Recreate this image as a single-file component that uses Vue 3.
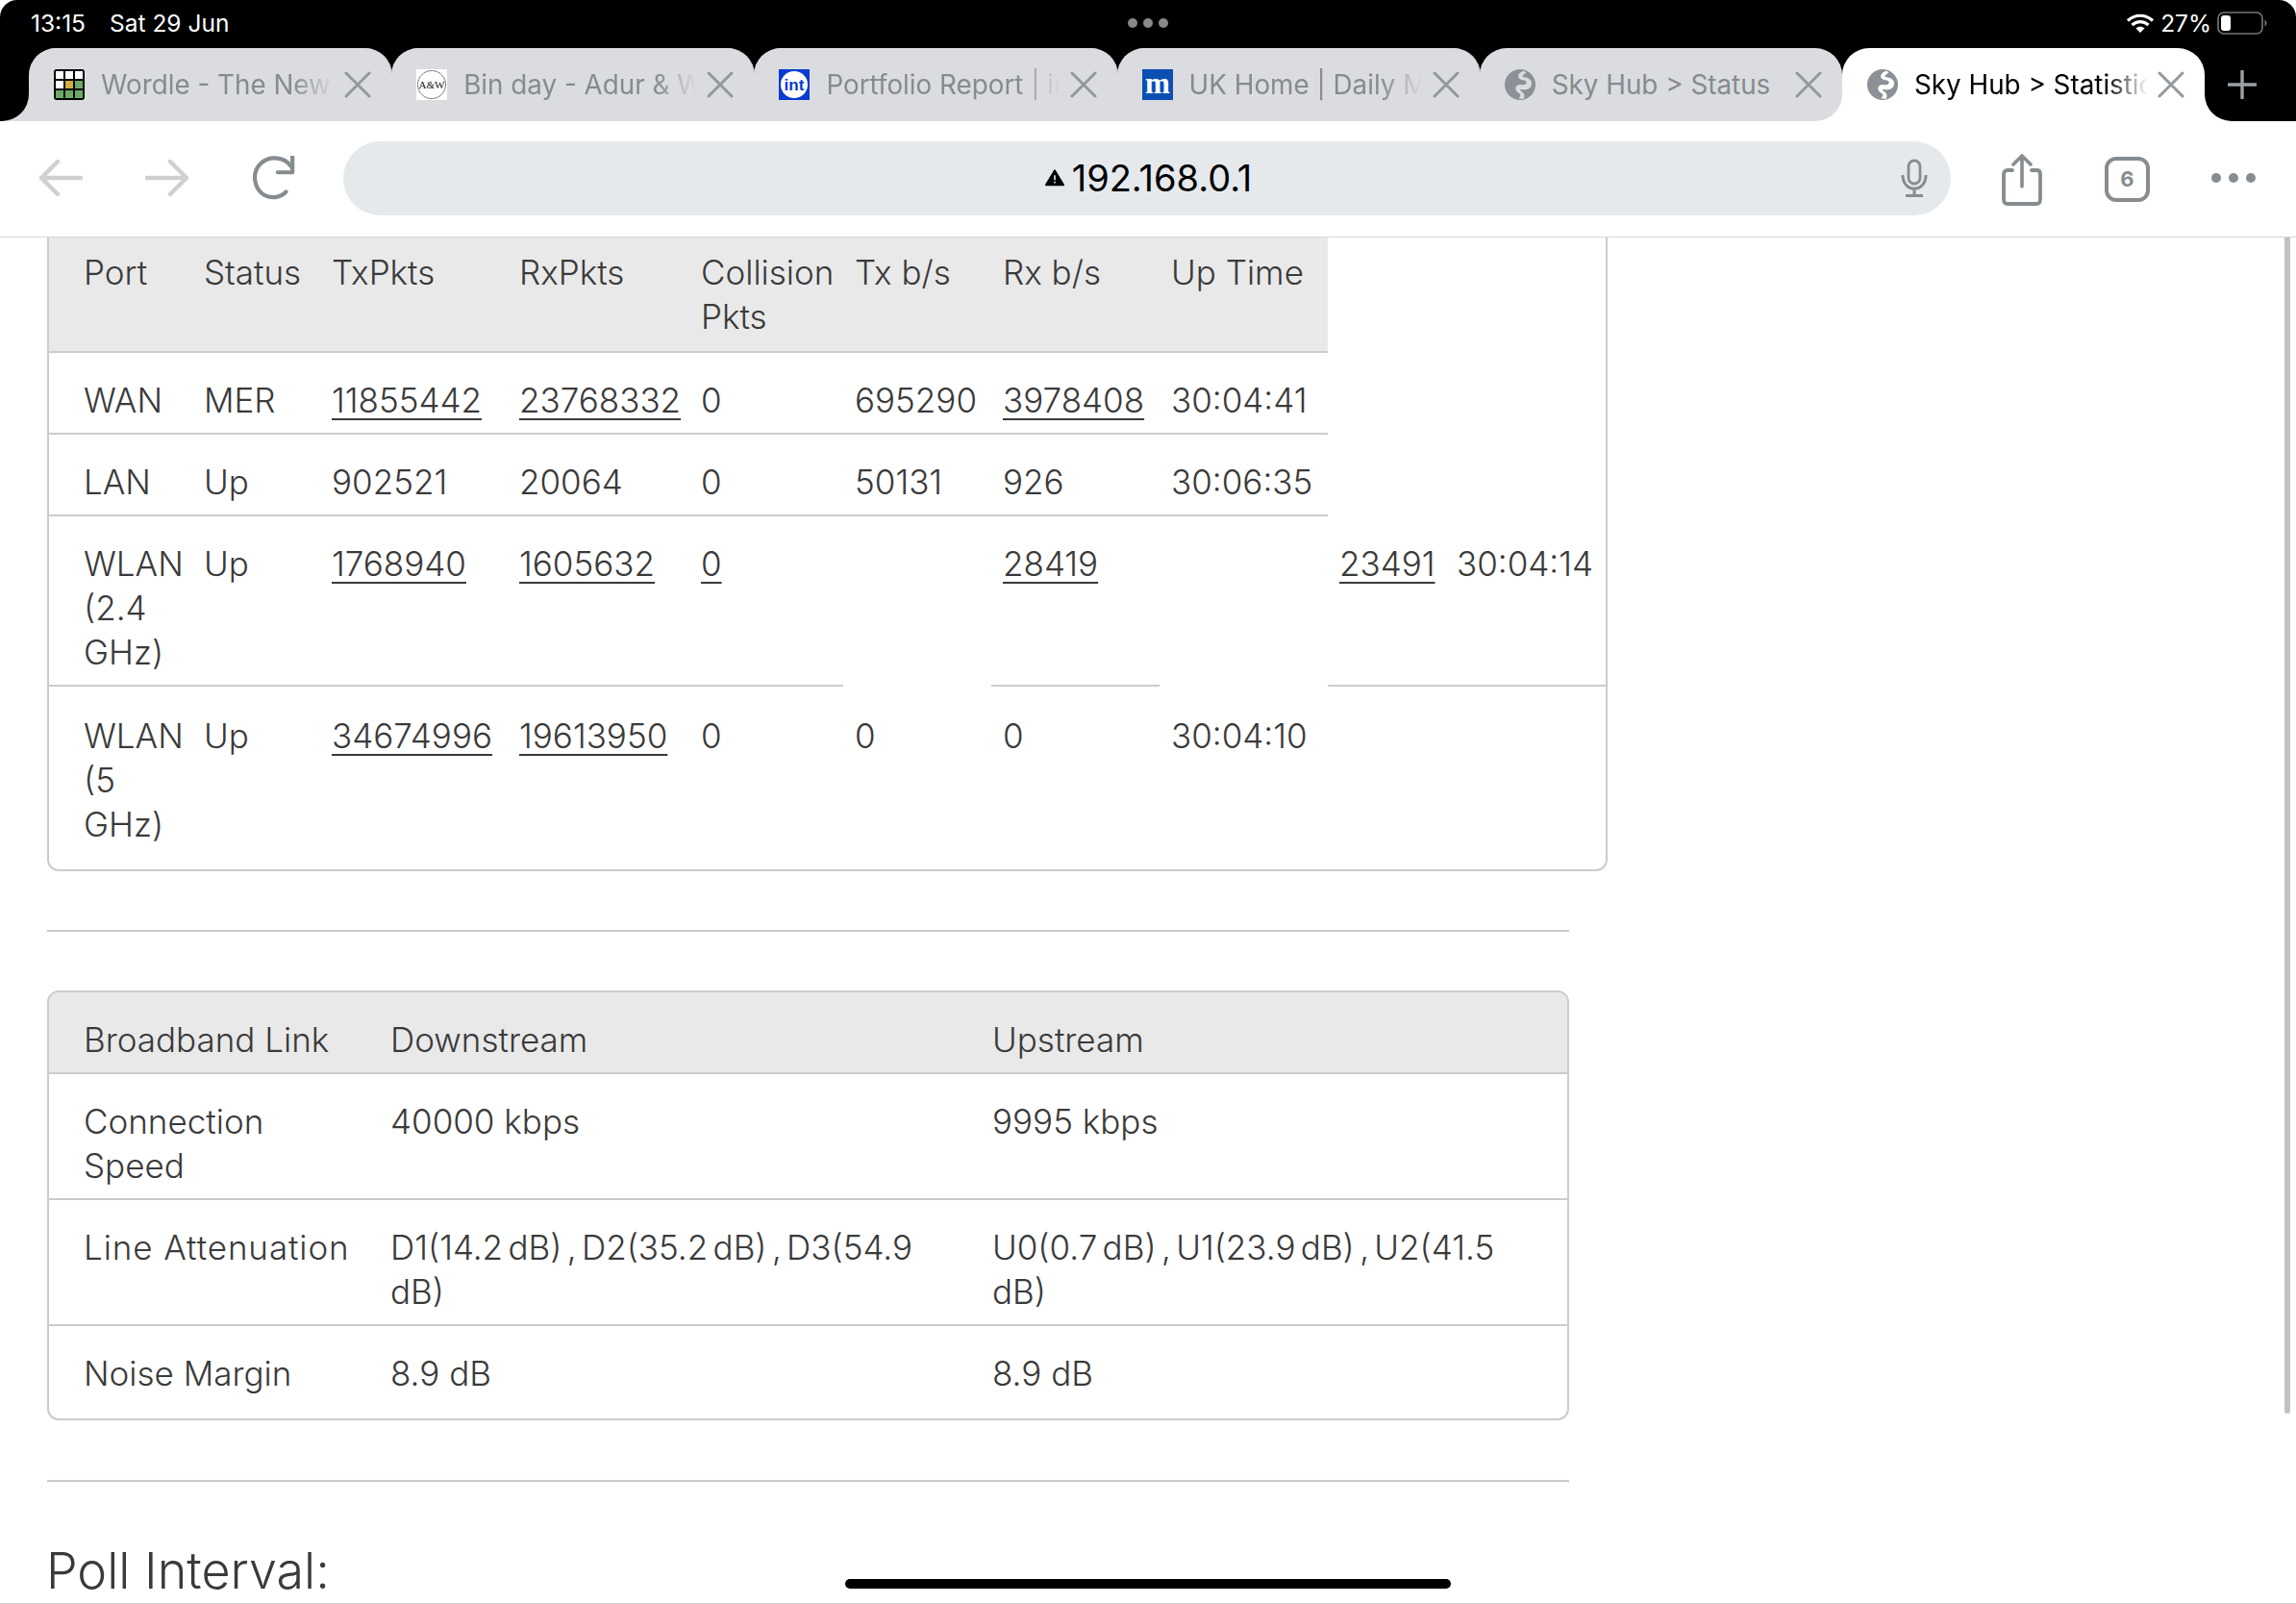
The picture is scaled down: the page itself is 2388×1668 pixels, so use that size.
<script setup>
const tabs = [
  { title: 'Wordle - The New York Times', icon: 'wordle' },
  { title: 'Bin day - Adur & Worthing', icon: 'aw' },
  { title: 'Portfolio Report | interactive', icon: 'int' },
  { title: 'UK Home | Daily Mail Online', icon: 'mail' },
  { title: 'Sky Hub > Status', icon: 'globe' },
  { title: 'Sky Hub > Statistics', icon: 'globe', active: true },
]
const wordle = ['#fff','#fff','#fff','#fff','#d0b13a','#6aaa64','#6aaa64','#6aaa64','#6aaa64']

const portCols = [149,133,195,189,160,154,175,175,122,167]
const portHead = ['Port','Status','TxPkts','RxPkts','Collision<br>Pkts','Tx b/s','Rx b/s','Up Time']
const portRows = [
  { c: [['WAN'],['MER'],['11855442',1],['23768332',1],['0'],['695290'],['3978408',1],['30:04:41']] },
  { c: [['LAN'],['Up'],['902521'],['20064'],['0'],['50131'],['926'],['30:06:35']] },
  { c: [['WLAN<br>(2.4<br>GHz)'],['Up'],['1768940',1],['1605632',1],['0',1],['',0,1],['28419',1],['',0,1],['23491',1],['30:04:14']] },
  { c: [['WLAN<br>(5<br>GHz)'],['Up'],['34674996',1],['19613950',1],['0'],['0'],['0'],['30:04:10']], last: true },
]
const linkRows = [
  ['Connection<br>Speed','40000 kbps','9995 kbps'],
  ['Line Attenuation','D1(14.2 dB) , D2(35.2 dB) , D3(54.9<br>dB)','U0(0.7 dB) , U1(23.9 dB) , U2(41.5<br>dB)'],
  ['Noise Margin','8.9 dB','8.9 dB'],
]
</script>

<template>
  <div class="page">
    <header class="status">
      <div class="status-left"><span>13:15</span><span>Sat 29 Jun</span></div>
      <div class="status-dots"><i></i><i></i><i></i></div>
      <div class="status-right">
        <svg class="wifi" width="30" height="22" viewBox="0 0 30 22"><path d="M2 8.500C9.500 1.500 20.500 1.500 28 8.500M6.500 13C11.500 8.500 18.500 8.500 23.500 13" fill="none" stroke="#fff" stroke-width="3.200"/><path d="M10.500 16.600C13 14.200 17 14.200 19.500 16.600L15 21Z" fill="#fff"/></svg>
        <span>27%</span>
        <svg class="batt" width="52" height="24" viewBox="0 0 52 24"><rect x="1" y="1" width="46" height="22" rx="6" fill="none" stroke="#777" stroke-width="1.600"/><rect x="4" y="4" width="10" height="16" rx="3" fill="#fff"/><path d="M49.500 8.500a4 4 0 0 1 0 7z" fill="#777"/></svg>
      </div>
    </header>

    <nav class="strip">
      <div class="corner-left"></div>
      <div v-for="(t, i) in tabs" :key="i" class="tab" :class="{ active: t.active, first: i === 0, prev: i === 4 }">
        <svg v-if="t.icon === 'wordle'" class="fav" width="32" height="32" viewBox="0 0 32 32">
          <rect width="32" height="32" rx="3" fill="#000"/>
          <rect v-for="(c, n) in wordle" :key="n" :x="2 + (n % 3) * 10" :y="2 + Math.floor(n / 3) * 10" width="8" height="8" :fill="c"/>
        </svg>
        <svg v-else-if="t.icon === 'aw'" class="fav" width="32" height="32" viewBox="0 0 32 32">
          <rect width="32" height="32" fill="#fff"/><circle cx="16" cy="16" r="14.500" fill="none" stroke="#222" stroke-dasharray="1 .6"/>
          <text x="16" y="20" text-anchor="middle" font-size="11" font-family="Liberation Serif, serif" fill="#111">A&amp;W</text>
        </svg>
        <svg v-else-if="t.icon === 'int'" class="fav" width="32" height="32" viewBox="0 0 32 32">
          <rect width="32" height="32" fill="#0a3bd1"/><circle cx="16" cy="16" r="14" fill="#fff"/>
          <text x="16" y="22" text-anchor="middle" font-size="17" font-weight="700" font-family="Liberation Sans, sans-serif" fill="#0a3bd1">int</text>
        </svg>
        <svg v-else-if="t.icon === 'mail'" class="fav" width="32" height="32" viewBox="0 0 32 32">
          <rect width="32" height="32" fill="#0b4fb3"/>
          <text x="16" y="25" text-anchor="middle" font-size="31" font-weight="700" font-family="Liberation Serif, serif" fill="#fff">m</text>
        </svg>
        <svg v-else class="fav" width="32" height="32" viewBox="0 0 32 32">
          <circle cx="16" cy="16" r="16" fill="#8b9196"/>
          <path :fill="t.active ? '#fff' : '#dbdce0'" :stroke="t.active ? '#fff' : '#dbdce0'" stroke-width="1.600" d="M20 2.500c-2.500 1-5.500 3-5 5.500.5 2.500 4 2 6.500 3 2.500 1 2.500 4 .5 5.500-2 1.300-5 0-7.500.5-2.500.6-3.200 3-1.800 5 1.300 1.800 3.800 2.200 4.300 4.300.3 1.300-.3 2.500-1 3.300l3 .5c1-1.800.8-4-.8-5.500-1.300-1.300-3-1.800-3.300-3-.2-.9.6-1.400 2-1.400 2.600 0 5.600 1 8-.8 3.200-2.400 3.300-7-.4-9-2.400-1.300-5.500-.8-6.800-2.300-.8-1 1-3.200 3.300-4.600Z"/>
        </svg>
        <span class="title">{{ t.title }}</span>
        <svg class="close" width="28" height="28" viewBox="0 0 28 28"><path d="M2 2L26 26M26 2L2 26" stroke="#92989c" stroke-width="3" stroke-linecap="round"/></svg>
      </div>
      <div class="plus">
        <svg width="30" height="30" viewBox="0 0 30 30"><path d="M15 1V29M1 15H29" stroke="#9aa0a4" stroke-width="3.400" stroke-linecap="round"/></svg>
      </div>
    </nav>

    <div class="toolbar">
      <svg class="t-back" width="46" height="38" viewBox="0 0 46 38"><path d="M20 2L3 19L20 36M3 19H44" fill="none" stroke="#cfd0d1" stroke-width="4.500" stroke-linecap="round" stroke-linejoin="round"/></svg>
      <svg class="t-fwd" width="46" height="38" viewBox="0 0 46 38"><path d="M26 2L43 19L26 36M43 19H2" fill="none" stroke="#cfd0d1" stroke-width="4.500" stroke-linecap="round" stroke-linejoin="round"/></svg>
      <svg class="t-reload" width="46" height="46" viewBox="0 0 48 48"><path d="M42 11C36 2 20 -1 10 8C-1 18 2 36 14 43C22 47 32 45 37 39" fill="none" stroke="#868c90" stroke-width="4.400" stroke-linecap="round"/><path d="M44 1V18H28" fill="none" stroke="#868c90" stroke-width="4.400" stroke-linecap="round" stroke-linejoin="round"/></svg>
      <div class="addr">
        <span></span>
        <div class="url">
          <svg width="20" height="18" viewBox="0 0 22 19"><path d="M11 1L21 17.500H1Z" fill="#000" stroke="#000" stroke-width="2" stroke-linejoin="round"/><path d="M11 6.500V12M11 13.500V15.500" stroke="#e6e9ec" stroke-width="1.800"/></svg>
          <span>192.168.0.1</span>
        </div>
        <svg class="mic" width="30" height="40" viewBox="0 0 30 40"><rect x="9" y="2" width="12" height="24" rx="6" fill="none" stroke="#868c90" stroke-width="2.800"/><path d="M3 17C3 36 27 36 27 17M15 30V38M6 38.500H24" fill="none" stroke="#868c90" stroke-width="3"/></svg>
      </div>
      <svg class="t-share" width="42" height="54" viewBox="0 0 42 54"><path d="M11 17H6C3.500 17 2 18.500 2 21V47C2 50 3.500 52 6 52H36C38.500 52 40 50 40 47V21C40 18.500 38.500 17 36 17H31" fill="none" stroke="#868c90" stroke-width="3.800" stroke-linecap="round"/><path d="M21 34V3M12 11L21 2L30 11" fill="none" stroke="#868c90" stroke-width="3.600" stroke-linecap="round" stroke-linejoin="round"/></svg>
      <div class="t-tabs">6</div>
      <div class="t-more"><i></i><i></i><i></i></div>
    </div>

    <main class="content">
      <div class="card card-ports">
        <table>
          <colgroup><col v-for="(w, i) in portCols" :key="i" :style="{ width: w + 'px' }" /></colgroup>
          <thead><tr><th v-for="h in portHead" :key="h" v-html="h"></th></tr></thead>
          <tbody>
            <tr v-for="(r, i) in portRows" :key="i" :class="{ last: r.last }">
              <td v-for="(c, j) in r.c" :key="j" :class="{ bare: c[2] }">
                <a v-if="c[1]">{{ c[0] }}</a>
                <span v-else v-html="c[0]"></span>
              </td>
            </tr>
          </tbody>
        </table>
      </div>

      <hr />

      <div class="card card-link">
        <table>
          <colgroup><col style="width:343px" /><col style="width:626px" /><col style="width:610px" /></colgroup>
          <thead><tr><th>Broadband Link</th><th>Downstream</th><th>Upstream</th></tr></thead>
          <tbody>
            <tr v-for="(r, i) in linkRows" :key="i" :class="{ last: i === 2, atten: i === 1 }">
              <td v-for="(c, j) in r" :key="j" v-html="c"></td>
            </tr>
          </tbody>
        </table>
      </div>

      <hr class="hr2" />

      <h2>Poll Interval:</h2>

      <div class="scrollbar"></div>
      <div class="home"></div>
    </main>
  </div>
</template>

<style>
html, body { margin: 0; padding: 0; background: #fff; }
</style>

<style scoped>
.page { width: 2388px; height: 1668px; overflow: hidden; display: flex; flex-direction: column; font-family: Inter, "Liberation Sans", sans-serif; background: #fff; }

.status { height: 50px; background: #000; color: #fff; border-radius: 18px 18px 0 0; display: grid; grid-template-columns: 1fr auto 1fr; align-items: center; padding: 0 30px 2px 32px; font-size: 24.500px; flex: none; box-sizing: border-box; }
.status-left { display: flex; gap: 25px; }
.status-dots { display: flex; gap: 6px; margin-left: -3px; }
.status-dots i { width: 10px; height: 10px; border-radius: 50%; background: #888; }
.status-right { display: flex; justify-content: flex-end; align-items: center; gap: 6px; }
.status-right span { font-size: 24.500px; }

.strip { height: 76px; flex: none; background: #000; display: flex; position: relative; isolation: isolate; }
.corner-left { width: 30px; background: #000; border-radius: 0 0 28px 0; position: relative; z-index: 3; }
.tab { width: 377.200px; flex: none; box-sizing: border-box; position: relative; display: flex; align-items: center; padding: 0 21px 0 26px; background: #dbdce0; border-radius: 28px 28px 28px 0; box-shadow: 1px 0 0 #bfc0c3; z-index: 2; }
.tab::before { content: ""; position: absolute; z-index: -2; left: 0; right: -4px; bottom: 0; height: 38px; background: #dbdce0; }
.tab.first::before { left: -30px; }
.tab.prev { border-radius: 28px 28px 28px 0; box-shadow: none; z-index: 2; }
.tab.prev::before { display: none; }
.tab.active { background: #fff; border-radius: 28px 28px 0 0; box-shadow: none; z-index: 1; }
.tab.active::before { left: -32px; right: -32px; background: #fff; }
.fav { flex: none; margin-right: 17px; }
.title { flex: 1; min-width: 0; white-space: nowrap; overflow: hidden; font-size: 27.800px; color: #858b90; -webkit-mask-image: linear-gradient(90deg, #000 82%, transparent 100%); mask-image: linear-gradient(90deg, #000 82%, transparent 100%); }
.tab.active .title { color: #000; }
.tab.prev .title { -webkit-mask-image: none; mask-image: none; }
.close { flex: none; margin-left: 10px; }
.plus { flex: 1; background: #000; border-radius: 0 0 0 28px; position: relative; z-index: 3; display: flex; align-items: center; padding-left: 24px; }

.toolbar { height: 121px; flex: none; box-sizing: border-box; border-bottom: 1px solid #d6d6d6; display: flex; align-items: center; background: #fff; padding-bottom: 2px; }
.t-back { margin-left: 40px; }
.t-fwd { margin-left: 65px; }
.t-reload { margin-left: 65px; }
.addr { margin-left: 49px; width: 1672px; height: 77px; border-radius: 39px; background: #e6e9ec; display: grid; grid-template-columns: 1fr auto 1fr; align-items: center; }
.url { display: flex; align-items: center; gap: 8px; margin-left: 3px; font-size: 38px; color: #000; }
.mic { justify-self: end; margin-right: 23px; }
.t-share { margin-left: 53px; margin-top: 4px; }
.t-tabs { margin-left: 65px; width: 47px; height: 47px; box-sizing: border-box; border: 4px solid #868c90; border-radius: 12px; color: #868c90; font-size: 22px; font-weight: 700; display: flex; align-items: center; justify-content: center; margin-top: 2px; }
.t-more { margin-left: 64px; display: flex; gap: 8px; }
.t-more i { width: 10px; height: 10px; border-radius: 50%; background: #868c90; }

.content { flex: 1; position: relative; overflow: hidden; padding-left: 49px; color: #3a3a3a; font-weight: 300; font-size: 35px; line-height: 46px; border-bottom: 1px solid #ccc; }
.card { box-sizing: border-box; border: 2px solid #ccc; border-radius: 12px; overflow: hidden; }
.card-ports { width: 1623px; margin-top: -14px; }
.card-link { width: 1583px; }
table { border-collapse: separate; border-spacing: 0; table-layout: fixed; width: 100%; }
th, td { text-align: left; font-weight: 300; padding: 26px 13px 11px 12px; vertical-align: top; border-bottom: 2px solid #ccc; white-space: nowrap; }
th { background: #e9e9e9; }
.card-ports th { padding-top: 25px; padding-bottom: 13px; }
th:first-child, td:first-child { padding-left: 36px; }
td.bare { border-bottom-color: transparent; }
tr.last td { border-bottom: 0; padding-top: 28px; padding-bottom: 24px; }
.card-link tr.last td { padding-top: 26px; padding-bottom: 24px; }
.atten td { word-spacing: -4.500px; }
.atten td:first-child { word-spacing: 0; letter-spacing: .9px; }
a { color: inherit; text-decoration: underline; text-decoration-thickness: 2px; text-underline-offset: 6px; }
hr { margin: 61px 0 61px; width: 1583px; height: 2px; border: 0; background: #ccc; }
.hr2 { margin-bottom: 0; margin-top: 62px; }
h2 { margin: 61px 0 0 -1px; font-size: 52px; font-weight: 300; line-height: 64px; color: #3a3a3a; }
.scrollbar { position: absolute; right: 6px; top: 0; width: 6px; height: 1223px; background: #c2c2c2; border-radius: 0 0 3px 3px; }
.home { position: absolute; left: 879px; top: 1395px; width: 630px; height: 10px; border-radius: 5px; background: #000; }
</style>
